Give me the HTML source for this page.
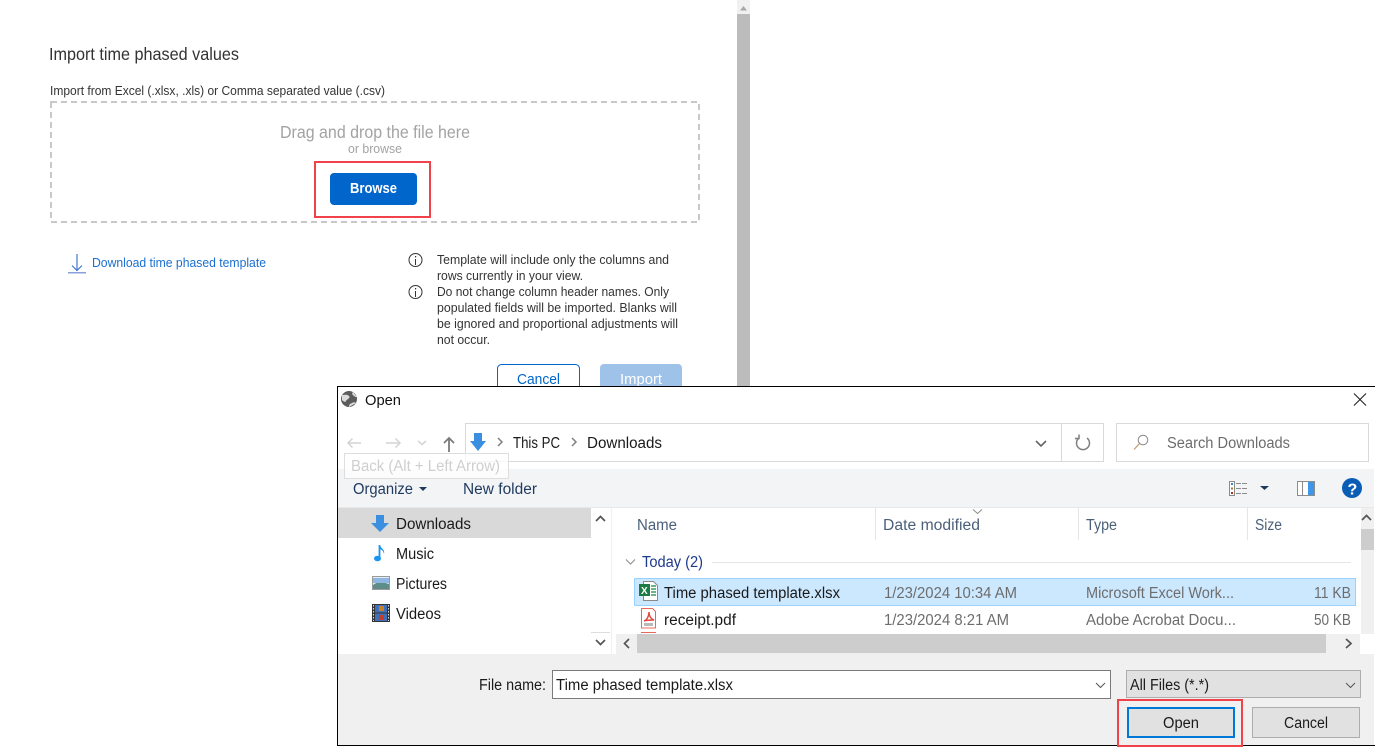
<!DOCTYPE html>
<html><head><meta charset="utf-8"><style>
html,body{margin:0;padding:0;background:#fff;width:1375px;height:747px;overflow:hidden}
svg{display:block}
text{font-family:"Liberation Sans",sans-serif;white-space:pre}
.l{font-size:13px;fill:#333}
.d{font-size:15.5px;fill:#1a1a1a}
.h{font-size:15.5px;fill:#4c607a}
.g{font-size:15.5px;fill:#6d6d6d}
</style></head><body>
<svg width="1375" height="747" viewBox="0 0 1375 747" xmlns="http://www.w3.org/2000/svg">
<rect width="1375" height="747" fill="#fff"/>
<!-- page scrollbar -->
<rect x="737" y="0" width="13" height="386" fill="#f1f1f1"/>
<rect x="737" y="14" width="13" height="372" fill="#bcbcbc"/>
<path d="M740 10.500l3.500-4.500 3.500 4.500z" fill="#a8a8a8"/>
<!-- left form -->
<text x="49" y="60" font-size="17.500" fill="#333" textLength="190" lengthAdjust="spacingAndGlyphs">Import time phased values</text>
<text x="50" y="95" class="l" textLength="335" lengthAdjust="spacingAndGlyphs">Import from Excel (.xlsx, .xls) or Comma separated value (.csv)</text>
<rect x="51" y="102" width="648" height="120" fill="none" stroke="#c8c8c8" stroke-width="2" stroke-dasharray="6 4"/>
<text x="280" y="138" font-size="17.500" fill="#a3a3a3" textLength="190" lengthAdjust="spacingAndGlyphs">Drag and drop the file here</text>
<text x="348" y="153" font-size="13" fill="#a3a3a3" textLength="54" lengthAdjust="spacingAndGlyphs">or browse</text>
<rect x="315" y="162" width="115" height="55" fill="none" stroke="#f0424a" stroke-width="2"/>
<rect x="330" y="173" width="87" height="32" rx="4" fill="#0066cc"/>
<text x="350" y="193" font-size="15" font-weight="bold" fill="#fff" textLength="47" lengthAdjust="spacingAndGlyphs">Browse</text>
<path d="M77 254v16M72 265.500l5 5 5-5" fill="none" stroke="#3f78cf" stroke-width="1.200"/>
<rect x="68" y="272" width="18" height="1.500" fill="#8a9fdc"/>
<text x="92" y="267" class="l" style="fill:#1a6fd0" textLength="174" lengthAdjust="spacingAndGlyphs">Download time phased template</text>
<g fill="none" stroke="#333" stroke-width="1"><circle cx="415.500" cy="260" r="6.500"/><circle cx="415.500" cy="292" r="6.500"/></g>
<path d="M415.500 259v6M415.500 291v6" stroke="#333" fill="none"/>
<rect x="415" y="256" width="1.200" height="1.400" fill="#333"/><rect x="415" y="288" width="1.200" height="1.400" fill="#333"/>
<text x="437" y="264" class="l" textLength="232" lengthAdjust="spacingAndGlyphs">Template will include only the columns and</text>
<text x="437" y="280" class="l" textLength="146" lengthAdjust="spacingAndGlyphs">rows currently in your view.</text>
<text x="437" y="296" class="l" textLength="232" lengthAdjust="spacingAndGlyphs">Do not change column header names. Only</text>
<text x="437" y="312" class="l" textLength="240" lengthAdjust="spacingAndGlyphs">populated fields will be imported. Blanks will</text>
<text x="437" y="328" class="l" textLength="241" lengthAdjust="spacingAndGlyphs">be ignored and proportional adjustments will</text>
<text x="437" y="344" class="l" textLength="53" lengthAdjust="spacingAndGlyphs">not occur.</text>
<rect x="497.500" y="364.500" width="82" height="32" rx="4" fill="#fff" stroke="#0066cc"/>
<text x="517" y="384" font-size="15" fill="#0066cc" textLength="43" lengthAdjust="spacingAndGlyphs">Cancel</text>
<rect x="600" y="364" width="82" height="33" rx="4" fill="#9fc3e8"/>
<text x="620" y="384" font-size="15" fill="#fff" textLength="42" lengthAdjust="spacingAndGlyphs">Import</text>

<!-- dialog -->
<rect x="337.500" y="386.500" width="1040" height="359" fill="#fff" stroke="#000"/>
<circle cx="349" cy="399" r="8" fill="#5c5c5c"/>
<path d="M342 395c3 0 5-1 7 1s-2 3-3 5-3 0-4-1M353 392c-2 2 0 3 1 4s2 1 3 1M349 407c0-3 1-3 3-4s2-1 4 0" fill="#dcdcdc"/>
<text x="365" y="405" font-size="15" fill="#111" textLength="36" lengthAdjust="spacingAndGlyphs">Open</text>
<path d="M1354 393.500l12 12M1366 393.500l-12 12" stroke="#222" stroke-width="1.100" fill="none"/>
<!-- nav -->
<g fill="none" stroke-width="1.500">
<path d="M361 443h-13M352.500 438.500l-4.500 4.500 4.500 4.500" stroke="#d4d4d4"/>
<path d="M386 443h14M395.500 438.500l4.500 4.500-4.500 4.500" stroke="#d4d4d4"/>
<path d="M418 441l4 3.500 4-3.500" stroke="#d4d4d4"/>
<path d="M449 452v-14M444 443l5-5 5 5" stroke="#7a7a7a" stroke-width="1.800"/>
</g>
<rect x="465.500" y="423.500" width="638" height="38" fill="#fff" stroke="#d9d9d9"/>
<rect x="1061" y="424" width="1" height="37" fill="#d9d9d9"/>
<path d="M474 433h8v8h4l-8 10-8-10h4z" fill="#3b8fe0"/>
<path d="M498 438l4 4-4 4M572 438l4 4-4 4" fill="none" stroke="#7f7f7f" stroke-width="1.500"/>
<text x="513" y="448" class="d" textLength="47" lengthAdjust="spacingAndGlyphs">This PC</text>
<text x="587" y="448" class="d" textLength="75" lengthAdjust="spacingAndGlyphs">Downloads</text>
<path d="M1036 441l5 5 5-5" fill="none" stroke="#666" stroke-width="1.600"/>
<path d="M1079 438a6.500 6.500 0 1 0 8 0M1079 434.500v4h-4" fill="none" stroke="#7f7f7f" stroke-width="1.500"/>
<rect x="1116.500" y="423.500" width="252" height="38" fill="#fff" stroke="#d9d9d9"/>
<circle cx="1143" cy="440" r="4.800" fill="none" stroke="#8a8a8a"/>
<path d="M1139.500 443.500l-5.500 6" stroke="#c19a6b" stroke-width="1.200"/>
<text x="1167" y="448" class="g" textLength="123" lengthAdjust="spacingAndGlyphs">Search Downloads</text>
<!-- toolbar -->
<rect x="338" y="469" width="1036" height="38" fill="#f3f4f6"/>
<rect x="344.500" y="453.500" width="164" height="25" fill="#fff" fill-opacity=".72" stroke="#dedede"/>
<text x="351" y="471" font-size="15.500" fill="#cfcfcf" textLength="149" lengthAdjust="spacingAndGlyphs">Back (Alt + Left Arrow)</text>
<text x="353" y="494" font-size="15.500" fill="#1f3a5f" textLength="60" lengthAdjust="spacingAndGlyphs">Organize</text>
<path d="M419 487h8l-4 4z" fill="#1f3a5f"/>
<text x="463" y="494" font-size="15.500" fill="#1f3a5f" textLength="74" lengthAdjust="spacingAndGlyphs">New folder</text>
<rect x="1229.500" y="481.500" width="5" height="14" fill="#fff" stroke="#8c8c8c"/>
<rect x="1231" y="483" width="2" height="2" fill="#3b82c4"/><rect x="1231" y="487.500" width="2" height="2" fill="#a08030"/><rect x="1231" y="492" width="2" height="2" fill="#b03020"/>
<path d="M1236 483.500h11M1236 488.500h11M1236 493.500h11" stroke="#8c8c8c" stroke-dasharray="5 1"/>
<path d="M1260 486h9l-4.500 4z" fill="#1f3a5f"/>
<rect x="1297.500" y="481.500" width="17" height="14" fill="#fff" stroke="#8c8c8c"/>
<rect x="1308" y="482" width="6" height="13" fill="#3d97e8"/>
<rect x="1302" y="482" width="1" height="13" fill="#8c8c8c"/>
<circle cx="1352" cy="488" r="10" fill="#0a5db5"/>
<text x="1347.500" y="494.500" font-size="16" font-weight="bold" fill="#fff">?</text>
<!-- separator -->
<rect x="338" y="507" width="1036" height="1" fill="#e8e8e8"/>
<!-- nav pane -->
<rect x="338" y="508" width="253" height="30" fill="#d9d9d9"/>
<path d="M376 515h8v8h5l-9 9-9-9h5z" fill="#3b8fe0"/>
<path d="M379.500 545v13" stroke="#1a96f0" stroke-width="1.800" fill="none"/>
<ellipse cx="377.500" cy="558.500" rx="3.500" ry="2.800" fill="#1a96f0"/>
<path d="M380 545c1 4 5 4 4 9-.5-3-2-4-4-5z" fill="#1a96f0"/>
<rect x="372.500" y="576.500" width="17" height="13" fill="#e4eef8" stroke="#9a9a9a"/>
<path d="M373 585c5-4 9-3 16-1v5h-16z" fill="#5d8d86"/>
<rect x="373" y="578" width="16" height="5" fill="#8fb6e0"/>
<rect x="372" y="604" width="18" height="18" fill="#333"/>
<path d="M373.500 605v16M388.500 605v16" stroke="#ddd" stroke-dasharray="1.500 1.500"/>
<rect x="375" y="605" width="12" height="7.500" fill="#4070b8"/><rect x="375" y="613.500" width="12" height="7.500" fill="#4070b8"/>
<rect x="379" y="606" width="5" height="5" fill="#c8802a"/><rect x="379" y="615" width="5" height="5" fill="#c83a2a"/>
<text x="396" y="529" class="d" textLength="75" lengthAdjust="spacingAndGlyphs">Downloads</text>
<text x="396" y="559" class="d" textLength="38" lengthAdjust="spacingAndGlyphs">Music</text>
<text x="396" y="589" class="d" textLength="51" lengthAdjust="spacingAndGlyphs">Pictures</text>
<text x="396" y="619" class="d" textLength="45" lengthAdjust="spacingAndGlyphs">Videos</text>
<!-- nav scrollbar -->
<rect x="591" y="632" width="19" height="1" fill="#dcdcdc"/>
<path d="M596 521l4.500-4.500 4.500 4.500M596 640l4.500 4.500 4.500-4.500" fill="none" stroke="#555" stroke-width="1.700"/>
<rect x="611" y="508" width="1" height="146" fill="#f0f0f0"/>
<!-- headers -->
<text x="637" y="530" class="h" textLength="40" lengthAdjust="spacingAndGlyphs">Name</text>
<text x="883" y="530" class="h" textLength="97" lengthAdjust="spacingAndGlyphs">Date modified</text>
<text x="1086" y="530" class="h" textLength="31" lengthAdjust="spacingAndGlyphs">Type</text>
<text x="1255" y="530" class="h" textLength="27" lengthAdjust="spacingAndGlyphs">Size</text>
<rect x="875" y="508" width="1" height="32" fill="#e5e5e5"/><rect x="1078" y="508" width="1" height="32" fill="#e5e5e5"/><rect x="1247" y="508" width="1" height="32" fill="#e5e5e5"/>
<path d="M973 509.500l4.500 4 4.500-4" fill="none" stroke="#8a8a8a"/>
<path d="M626 559.500l4.500 4.500 4.500-4.500" fill="none" stroke="#8a8a8a"/>
<text x="642" y="567" font-size="15.500" fill="#1e3a8a" textLength="61" lengthAdjust="spacingAndGlyphs">Today (2)</text>
<rect x="712" y="562" width="639" height="1" fill="#e5e5e5"/>
<!-- rows -->
<rect x="634.500" y="578.500" width="721" height="27" fill="#cce8ff" stroke="#99d1ff"/>
<path d="M643.500 581.500h10l4 4v15h-14z" fill="#fff" stroke="#8a8a8a"/>
<rect x="639" y="584" width="11" height="12" fill="#1e7a45"/>
<text x="641" y="594" font-size="10" font-weight="bold" fill="#fff">X</text>
<path d="M651 586h5M651 589h5M651 592h5M651 595h5" stroke="#3b9a64" stroke-width="1.500"/>
<path d="M641.500 608.500h11l3 3v16.500h-14z" fill="#fff" stroke="#e8685f"/>
<path d="M644 621c3-1 5-5 5-9 0 4 2 7 5 8-3 0-7 0-10 1z" fill="none" stroke="#e34a40" stroke-width="1.500"/>
<rect x="644" y="623" width="9" height="3" fill="#b9b9b9"/>
<rect x="641" y="632" width="15" height="1" fill="#e8685f"/>
<text x="664" y="598" class="d" textLength="176" lengthAdjust="spacingAndGlyphs">Time phased template.xlsx</text>
<text x="884" y="598" class="g" textLength="133" lengthAdjust="spacingAndGlyphs">1/23/2024 10:34 AM</text>
<text x="1086" y="598" class="g" textLength="148" lengthAdjust="spacingAndGlyphs">Microsoft Excel Work...</text>
<text x="1314" y="598" class="g" textLength="37" lengthAdjust="spacingAndGlyphs">11 KB</text>
<text x="664" y="625" class="d" textLength="72" lengthAdjust="spacingAndGlyphs">receipt.pdf</text>
<text x="884" y="625" class="g" textLength="125" lengthAdjust="spacingAndGlyphs">1/23/2024 8:21 AM</text>
<text x="1086" y="625" class="g" textLength="150" lengthAdjust="spacingAndGlyphs">Adobe Acrobat Docu...</text>
<text x="1314" y="625" class="g" textLength="37" lengthAdjust="spacingAndGlyphs">50 KB</text>
<!-- v scrollbar -->
<rect x="1361" y="508" width="13" height="126" fill="#f0f0f0"/>
<rect x="1361" y="529" width="13" height="21" fill="#cdcdcd"/>
<path d="M1362 520l4.500-4.500 4.500 4.500" fill="none" stroke="#555" stroke-width="1.700"/>
<!-- h scrollbar -->
<rect x="616" y="634" width="744" height="20" fill="#f0f0f0"/>
<rect x="637" y="634" width="689" height="19" fill="#cdcdcd"/>
<path d="M629 639l-4.500 4.500 4.500 4.500M1346 639l5 4.500-5 4.500" fill="none" stroke="#555" stroke-width="1.700"/>
<!-- bottom -->
<rect x="338" y="654" width="1036" height="91" fill="#f0f0f0"/>
<text x="479" y="690" class="d" textLength="67" lengthAdjust="spacingAndGlyphs">File name:</text>
<rect x="552.500" y="670.500" width="558" height="28" fill="#fff" stroke="#7a7a7a"/>
<text x="556" y="690" class="d" textLength="177" lengthAdjust="spacingAndGlyphs">Time phased template.xlsx</text>
<path d="M1096 683l4.500 4.500 4.500-4.500" fill="none" stroke="#555"/>
<rect x="1126.500" y="670.500" width="234" height="27" fill="#e1e1e1" stroke="#adadad"/>
<text x="1130" y="690" class="d" textLength="79" lengthAdjust="spacingAndGlyphs">All Files (*.*)</text>
<path d="M1346 683l4.500 4.500 4.500-4.500" fill="none" stroke="#555"/>
<rect x="1128" y="708" width="106" height="29" fill="#e1e1e1" stroke="#0078d7" stroke-width="2"/>
<text x="1163" y="728" class="d" textLength="36" lengthAdjust="spacingAndGlyphs">Open</text>
<rect x="1252.500" y="707.500" width="107" height="30" fill="#e1e1e1" stroke="#adadad"/>
<text x="1284" y="728" class="d" textLength="44" lengthAdjust="spacingAndGlyphs">Cancel</text>
<rect x="1118" y="700" width="124" height="46" fill="none" stroke="#f0424a" stroke-width="2"/>
</svg>
</body></html>
